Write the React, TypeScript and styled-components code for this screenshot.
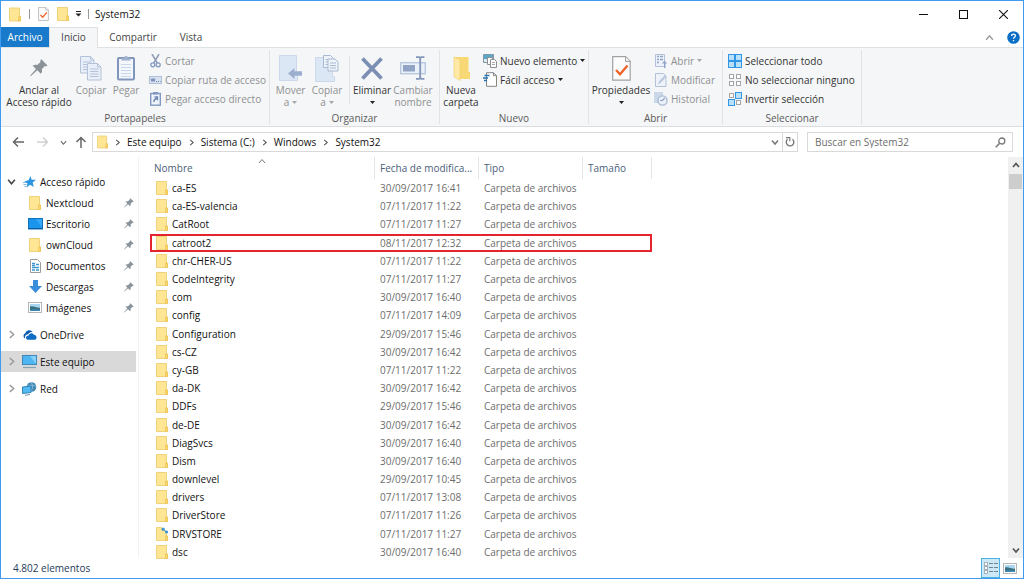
import React from "react";
import styled, { createGlobalStyle, css } from "styled-components";

const GlobalStyle = createGlobalStyle`
  *, *::before, *::after { box-sizing: border-box; }
  html, body, #root { height: 100%; margin: 0; }
  body, button, input, table {
    font-family: "Open Sans", "Noto Sans", sans-serif;
    font-size: 10px;
    line-height: 12px;
  }
  button { border: 0; padding: 0; background: none; color: inherit; }
  a { color: inherit; text-decoration: none; }
  svg { display: block; flex: none; }
`;

/* ---------- Window ---------- */

const Window = styled.div`
  display: flex;
  flex-direction: column;
  height: 100vh;
  min-height: 480px;
  border: 1px solid #3f9bf0;
  background: #fff;
  color: #111;
`;

const TitleBar = styled.header`
  display: flex;
  align-items: center;
  height: 26px;
  padding-left: 8px;
`;

const QuickAccess = styled.div<{ $gap: number }>`
  display: flex;
  align-items: center;
  gap: ${(p) => p.$gap}px;
  margin-right: 6px;
`;

const Bar = styled.span`
  width: 1px;
  height: 10px;
  background: #9a9a9a;
`;

const IconButton = styled.button`
  display: flex;
  align-items: center;
  justify-content: center;
`;

const WindowTitle = styled.h1`
  flex: 1;
  margin: 0;
  font-size: 10px;
  font-weight: 400;
`;

const WindowButton = styled(IconButton)`
  width: 40px;
  height: 26px;
`;

/* ---------- Ribbon ---------- */

const TabStrip = styled.nav`
  display: flex;
  height: 21px;
  padding-right: 3px;
  border-bottom: 1px solid #dfe1e3;
`;

const Tab = styled.button<{ $kind?: "file" | "active"; $width: number }>`
  width: ${(p) => p.$width}px;
  height: 20px;
  color: #444;
  ${(p) =>
    p.$kind === "file" &&
    css`
      background: #1979ca;
      color: #fff;
    `}
  ${(p) =>
    p.$kind === "active" &&
    css`
      height: 21px;
      padding-bottom: 2px;
      border: 1px solid #dfe1e3;
      border-bottom: 0;
      background: #f5f6f7;
    `}
`;

const TabTools = styled.div`
  display: flex;
  align-items: center;
  gap: 13px;
  margin-left: auto;
`;

const Ribbon = styled.section`
  display: flex;
  height: 79px;
  padding: 2px 0;
  background: #f5f6f7;
  border-bottom: 1px solid #dcdddf;
`;

const Group = styled.div<{ $width: number }>`
  display: flex;
  flex-direction: column;
  flex: none;
  width: ${(p) => p.$width}px;
  border-right: 1px solid #e1e3e5;
`;

const GroupBody = styled.div`
  display: flex;
  flex: 1;
  padding-left: 2px;
`;

const GroupCaption = styled.div`
  height: 12px;
  color: #5a5a5a;
  text-align: center;
`;

const BigButton = styled.button<{ $width: number }>`
  display: flex;
  flex-direction: column;
  align-items: center;
  flex: none;
  width: ${(p) => p.$width}px;
  padding-top: 4px;
  color: #333;
  white-space: nowrap;
  &:disabled { color: #8e9092; }
`;

const BigIcon = styled.span`
  display: flex;
  align-items: center;
  justify-content: center;
  height: 28px;
  margin-bottom: 2px;
`;

const SecondLine = styled.span`
  display: flex;
  align-items: center;
  justify-content: center;
  gap: 3px;
  height: 12px;
`;

const SmallColumn = styled.div`
  display: flex;
  flex-direction: column;
  padding: 1px 0 0 3px;
`;

const SmallButton = styled.button`
  display: flex;
  align-items: center;
  gap: 3px;
  height: 19px;
  color: #333;
  white-space: nowrap;
  &:disabled { color: #8e9092; }
`;

const SmallIcon = styled.span`
  display: flex;
  align-items: center;
  justify-content: center;
  width: 14px;
`;

const Divider = styled.span`
  width: 1px;
  height: 48px;
  margin: 6px 2px 0 4px;
  background: #dfe1e3;
`;

/* ---------- Address bar ---------- */

const AddressRow = styled.div`
  display: flex;
  align-items: center;
  height: 30px;
  padding: 0 10px 0 5px;
`;

const NavButton = styled(IconButton)<{ $width: number }>`
  flex: none;
  width: ${(p) => p.$width}px;
  height: 20px;
`;

const AddressBox = styled.div`
  display: flex;
  align-items: center;
  flex: 1;
  height: 20px;
  padding-left: 4px;
  border: 1px solid #d9d9d9;
`;

const Crumbs = styled.nav`
  display: flex;
  align-items: center;
  flex: 1;
  padding-left: 6px;
`;

const Crumb = styled.a`
  display: flex;
  align-items: center;
  gap: 6px;
  margin-right: 6px;
`;

const RefreshButton = styled(NavButton)`
  height: 18px;
  border-left: 1px solid #d9d9d9;
`;

const SearchBox = styled.label`
  display: flex;
  align-items: center;
  width: 206px;
  height: 20px;
  margin-left: 9px;
  padding: 0 6px 0 7px;
  border: 1px solid #d9d9d9;
`;

const SearchInput = styled.input`
  flex: 1;
  min-width: 0;
  padding: 0;
  border: 0;
  outline: 0;
  background: none;
  &::placeholder { color: #6d6d6d; opacity: 1; }
`;

/* ---------- Body ---------- */

const Body = styled.div`
  display: flex;
  flex: 1;
  min-height: 0;
`;

const Sidebar = styled.nav`
  flex: none;
  width: 138px;
  padding: 14px 2px 0 0;
  border-right: 1px solid #f3f3f3;
`;

const TreeSection = styled.ul`
  margin: 0 0 6px;
  padding: 0;
  list-style: none;
`;

const TreeItem = styled.a<{ $nested?: boolean; $selected?: boolean }>`
  display: flex;
  align-items: center;
  height: 21px;
  padding: 0 2px 0 ${(p) => (p.$nested ? 26 : 5)}px;
  background: ${(p) => (p.$selected ? "#d9d9d9" : "transparent")};
`;

const TreeIcon = styled.span`
  display: flex;
  align-items: center;
  justify-content: center;
  width: 16px;
  margin-right: 3px;
`;

const Twisty = styled.span`
  display: flex;
  justify-content: center;
  width: 10px;
  margin-right: 5px;
`;

const TreeLabel = styled.span`
  flex: 1;
`;

const ListPane = styled.main`
  flex: 1;
  min-width: 0;
  padding-left: 11px;
`;

/* The last row reaches a little way into the empty top of the status bar. */
const FileTable = styled.table`
  width: 502px;
  height: calc(100% + 3px);
  table-layout: fixed;
  border-collapse: separate;
  border-spacing: 0;
`;

const HeadCell = styled.th`
  position: relative;
  height: 22px;
  padding: 0 5px;
  border-right: 1px solid #e5e5e5;
  color: #4c607a;
  font-weight: 400;
  text-align: left;
  white-space: nowrap;
  &:first-child { padding-left: 4px; }
`;

const SortMark = styled.span`
  position: absolute;
  top: 0;
  left: calc(50% - 4px);
`;

const FileRow = styled.tr<{ $marked?: boolean }>`
  ${(p) =>
    p.$marked &&
    css`
      outline: 2px solid #e3242e;
      outline-offset: -2px;
    `}
`;

const Cell = styled.td`
  padding: 0 5px;
  color: #6d6d6d;
  white-space: nowrap;
`;

const NameCell = styled(Cell)`
  padding-left: 6px;
  color: #111;
`;

const FileName = styled.a`
  display: flex;
  align-items: center;
  gap: 4px;
  height: 15px;
`;

const ScrollTrack = styled.div`
  display: flex;
  flex-direction: column;
  align-items: center;
  width: 15px;
  background: #f0f0f0;
`;

const ScrollButton = styled(IconButton)`
  width: 15px;
  height: 16px;
`;

const ScrollThumb = styled.div`
  width: 13px;
  height: 15px;
  margin: 1px 0 auto;
  background: #cdcdcd;
`;

const StatusBar = styled.footer`
  display: flex;
  align-items: center;
  height: 20px;
  padding: 0 4px 0 12px;
  color: #1e395b;
`;

const StatusText = styled.span`
  flex: 1;
`;

const ViewButton = styled(IconButton)<{ $on?: boolean }>`
  width: 19px;
  height: 20px;
  border: 1px solid ${(p) => (p.$on ? "#4ab2e2" : "transparent")};
  background: ${(p) => (p.$on ? "#cce8f6" : "transparent")};
`;

/* ---------- Icons ---------- */

const Folder = ({ w = 12, h = 14, linked = false }: { w?: number; h?: number; linked?: boolean }) => (
  <svg width={w} height={h} viewBox="0 0 12 14" aria-hidden="true">
    <path d={linked ? "M.5 .5h5l5 5v3.500h1v4.500H.5z" : "M.5 .5h10v8.500h1v4.500H.5z"} fill="#ffe694" stroke="#f0d27a" />
    <path d="M9.500 9h2v4.500h-2z" fill="#fbd96b" stroke="#e9c256" strokeWidth=".7" />
    {linked && <path d="M6 1.200h2.200v2H6zM8 3l2 1.500M9.500 4h2v2h-2z" fill="#3f93cf" stroke="#3f93cf" strokeWidth=".8" />}
  </svg>
);

const Chevron = ({ dir, size = 8, color = "#555", weight = 1.2 }: { dir: "up" | "down" | "right"; size?: number; color?: string; weight?: number }) => {
  const d = { up: "M1 6l3-3.500L7 6", down: "M1 2.500L4 6l3-3.500", right: "M2.500 1L6 4 2.500 7" }[dir];
  return (
    <svg width={size} height={size} viewBox="0 0 8 8" aria-hidden="true">
      <path d={d} fill="none" stroke={color} strokeWidth={weight} />
    </svg>
  );
};

const Caret = ({ color = "#222" }: { color?: string }) => (
  <svg width="5" height="3" viewBox="0 0 5 3" aria-hidden="true">
    <path d="M0 0h5L2.500 3z" fill={color} />
  </svg>
);

const CheckedPage = ({ w, h }: { w: number; h: number }) => (
  <svg width={w} height={h} viewBox="0 0 19 25" aria-hidden="true">
    <path d="M.7.700h13l4.500 4.500v19H.7z" fill="#fcfcfc" stroke="#a2a2a2" strokeWidth="1.200" />
    <path d="M13.500.700v4.800h4.700" fill="#eee" stroke="#a2a2a2" />
    <path d="M4 14l4 4.300 7.500-8.800" fill="none" stroke="#f0642a" strokeWidth="2.400" />
  </svg>
);

const QuickMenu = () => (
  <svg width="7" height="6" viewBox="0 0 7 6" aria-hidden="true">
    <path d="M1 .5h5" stroke="#222" />
    <path d="M.5 2.500h6L3.500 5.500z" fill="#222" />
  </svg>
);

const Pin = ({ size, color }: { size: number; color: string }) => (
  <svg width={size} height={size} viewBox="0 0 18 18" aria-hidden="true">
    <path d="M11.300.300l6.200 6.200-1.700.9-1-.3-3 3.100c.6 2 .2 3.400-1 4.500l-3.500-3.400L.6 17.300 0 16.800l6-6.700-3.300-3.400c1.200-1 2.700-1.300 4.500-.8l3.300-3-.2-1.300z" fill={color} />
  </svg>
);

const CopyPages = () => (
  <svg width="22" height="25" viewBox="0 0 22 25" aria-hidden="true">
    {[[0.5, 0.5], [7.5, 7.500]].map(([x, y]) => (
      <g key={x} transform={`translate(${x} ${y})`}>
        <path d="M0 0h10l3.500 3.500v13H0z" fill="#e8eff8" stroke="#b3c2d9" />
        <path d="M10 0v3.500h3.500M2.500 5.500h8.500M2.500 8h8.500M2.500 10.500h8.500M2.500 13h8.500" fill="none" stroke="#b3c2d9" />
      </g>
    ))}
  </svg>
);

const Clipboard = () => (
  <svg width="18" height="26" viewBox="0 0 18 26" aria-hidden="true">
    <rect x="1" y="3" width="16" height="21.500" rx="1" fill="#f3f7fc" stroke="#8095bb" strokeWidth="2" />
    <path d="M4.500 5.500V3H7a2 2 0 0 1 4 0h2.500v2.500z" fill="#9fb0cc" />
    <path d="M4 9.500h10M4 12.500h10M4 15.500h10M4 18.500h10M4 21.500h10" stroke="#cbd8ea" />
  </svg>
);

const Scissors = () => (
  <svg width="11" height="14" viewBox="0 0 11 14" aria-hidden="true">
    <path d="M2 0l5.200 9M9 0L3.800 9" stroke="#8f9db8" strokeWidth="1.500" />
    <circle cx="2.800" cy="10.800" r="2" fill="none" stroke="#8398c0" strokeWidth="1.300" />
    <circle cx="8.200" cy="10.800" r="2" fill="none" stroke="#8398c0" strokeWidth="1.300" />
  </svg>
);

const PathTag = () => (
  <svg width="13" height="8" viewBox="0 0 13 8" aria-hidden="true">
    <rect x=".5" y=".5" width="12" height="7" fill="#d7e1f0" stroke="#b2c1da" />
    <path d="M2 2.500l1 3 1-3 1 3 1-3M7 5.500h1M9 5.500h1M11 5.500h.7" fill="none" stroke="#7389b3" />
  </svg>
);

const PasteLink = () => (
  <svg width="11" height="14" viewBox="0 0 11 14" aria-hidden="true">
    <rect x=".7" y="1.500" width="9.600" height="11.700" fill="#eef3fa" stroke="#8398c0" strokeWidth="1.400" />
    <path d="M3 0h5v2.500H3z" fill="#8398c0" />
    <path d="M3.800 10c0-2 .8-3 3-3.500M4.500 5h3v3.200" fill="none" stroke="#6d84b2" strokeWidth="1.300" />
  </svg>
);

const MoveTo = () => (
  <svg width="24" height="26" viewBox="0 0 24 26" aria-hidden="true">
    <path d="M.5.500h17v20h1v5H.5z" fill="#dce7f5" stroke="#cdd9ea" />
    <path d="M9 18.500l6.500-5.500v3.200H23v4.600h-7.500V24z" fill="#9dafcf" />
  </svg>
);

const CopyTo = () => (
  <svg width="24" height="27" viewBox="0 0 24 27" aria-hidden="true">
    <path d="M.5 2.500h17v19h2v5H.5z" fill="#dce7f5" stroke="#cdd9ea" />
    {[[8.500, 0.5], [13, 4]].map(([x, y]) => (
      <g key={x} transform={`translate(${x} ${y})`}>
        <path d="M0 0h7l3 3v9H0z" fill="#eef3fa" stroke="#a9b9d3" />
        <path d="M2 4h6M2 6.500h6M2 9h6" stroke="#a9b9d3" />
      </g>
    ))}
  </svg>
);

const DeleteCross = () => (
  <svg width="22" height="23" viewBox="0 0 22 23" aria-hidden="true">
    <path d="M1.500 1.500l19 20M20.500 1.500l-19 20" stroke="#7b8eb3" strokeWidth="3.800" />
  </svg>
);

const Rename = () => (
  <svg width="26" height="24" viewBox="0 0 26 24" aria-hidden="true">
    <rect x=".7" y="6.700" width="24.600" height="11" fill="#eaf1f9" stroke="#b8c8df" strokeWidth="1.400" />
    <rect x="3" y="9" width="12" height="6.500" fill="#91a4c6" />
    <path d="M16 1.200h3.200l1 1 1-1h3.200M20.200 2v20M16 22.800h3.200l1-1 1 1h3.200" fill="none" stroke="#8396ba" strokeWidth="1.800" />
  </svg>
);

const NewFolder = () => (
  <svg width="17" height="25" viewBox="0 0 17 25" aria-hidden="true">
    <path d="M1 1h14.500v15H17v7H4z" fill="#f8d775" />
    <path d="M1 1l6 3v20.500L1 21z" fill="#ffe9a4" stroke="#f2cf6a" strokeWidth=".6" />
  </svg>
);

const NewItem = () => (
  <svg width="14" height="14" viewBox="0 0 14 14" aria-hidden="true">
    <path d="M.5.500h10v8h-10z" fill="#dcecf5" stroke="#7f97a7" />
    <path d="M1 1h9v4H1z" fill="#59a7c9" />
    <path d="M4.500 3.500h5v7h-5z" fill="#fff" stroke="#8f8f8f" />
    <path d="M7.500 5.500h4l2 2v6h-6z" fill="#fff" stroke="#8f8f8f" />
    <path d="M9 8.500h3M9 10.500h3" stroke="#aaa" />
  </svg>
);

const EasyAccess = () => (
  <svg width="14" height="15" viewBox="0 0 14 15" aria-hidden="true">
    <path d="M3.500.700h7l3 3v10.600h-10z" fill="#fff" stroke="#858585" />
    <path d="M10.500.700v3h3" fill="none" stroke="#858585" />
    <path d="M1.500 3.500h5M0 6h5M1 8.500h3" stroke="#2574b5" strokeWidth="1.500" />
  </svg>
);

const OpenItem = () => (
  <svg width="12" height="14" viewBox="0 0 12 14" aria-hidden="true">
    <path d="M.5.500h9v12h-9z" fill="#edf2fa" stroke="#b3c2d9" />
    <path d="M2 2.500h2M2 5.500h2M2 8.500h2M5 2.500h3M5 5.500h3" stroke="#8fa3c8" strokeWidth="1.500" />
    <path d="M9 14V9.500H7L9.500 6.500 12 9.500h-1.500V14z" fill="#91a4c9" />
  </svg>
);

const EditItem = () => (
  <svg width="12" height="14" viewBox="0 0 12 14" aria-hidden="true">
    <path d="M.5.500h8l2.500 2.500v10.500H.5z" fill="#eef3fa" stroke="#b3c2d9" />
    <path d="M3 11.500L4 8.500l6-6.500 1.500 1.500-6 6.500z" fill="#b8c7de" />
  </svg>
);

const History = () => (
  <svg width="14" height="14" viewBox="0 0 14 14" aria-hidden="true">
    <path d="M0 0h9v11H0z" fill="#cbd8ea" />
    <circle cx="8.500" cy="8.500" r="4.600" fill="#eaf0f8" stroke="#a9b9d3" strokeWidth="1.400" />
    <path d="M6 8.500h2.500l2.300-2.500" fill="none" stroke="#8fa3c8" strokeWidth="1.200" />
  </svg>
);

const Squares = ({ on }: { on: boolean[] }) => (
  <svg width="14" height="14" viewBox="0 0 14 14" aria-hidden="true">
    {on.map((lit, i) => {
      const size = lit ? 6 : 4;
      const x = (i % 2) * 7 + (lit ? 0.5 : 1.5);
      const y = Math.floor(i / 2) * 7 + (lit ? 0.5 : 1.5);
      return <rect key={i} x={x} y={y} width={size} height={size} fill={lit ? "#b9e0fa" : "#fff"} stroke={lit ? "#2f97e6" : "#a5a5a5"} />;
    })}
  </svg>
);

const Arrow = ({ dir, color }: { dir: "left" | "right" | "up"; color: string }) => {
  const d = { left: "M12 6H1.500M6 1.500L1.500 6 6 10.500", right: "M0 6h10.500M6 1.500l4.500 4.500L6 10.500", up: "M6 12V1.500M1.500 6L6 1.500 10.500 6" }[dir];
  return (
    <svg width="12" height="12" viewBox="0 0 12 12" aria-hidden="true">
      <path d={d} fill="none" stroke={color} strokeWidth="1.500" />
    </svg>
  );
};

const Refresh = () => (
  <svg width="10" height="10" viewBox="0 0 10 10" aria-hidden="true">
    <path d="M7.500 2.200A3.800 3.800 0 1 1 2.500 2.300" fill="none" stroke="#777" strokeWidth="1.400" />
    <path d="M1 .7h3.800v3.600" fill="none" stroke="#777" strokeWidth="1.200" />
  </svg>
);

const Magnifier = () => (
  <svg width="11" height="11" viewBox="0 0 11 11" aria-hidden="true">
    <circle cx="6.800" cy="4" r="3" fill="none" stroke="#777" strokeWidth="1.300" />
    <path d="M4.700 6.200L.7 10.200" stroke="#777" strokeWidth="1.600" />
  </svg>
);

const Help = () => (
  <svg width="13" height="13" viewBox="0 0 13 13" aria-hidden="true">
    <circle cx="6.500" cy="6.500" r="6.300" fill="#0b6fc7" />
    <path d="M4.600 5c0-2.600 3.800-2.400 3.800-.2 0 1.400-1.900 1.400-1.900 3M6.500 9v1.300" fill="none" stroke="#fff" strokeWidth="1.300" />
  </svg>
);

const QuickStar = () => (
  <svg width="13" height="12" viewBox="0 0 13 12" aria-hidden="true">
    <path d="M7.500 0l1.200 3.700 4.300.1-3.300 2.600 1 4.600-3.600-2.300L3.500 11.500l1-4L1.500 5.500 5.700 4z" fill="#2b95e0" />
    <path d="M0 6.500h3M.5 8.500h3M1.500 10.500h2" stroke="#7dbdea" />
  </svg>
);

const Desktop = () => (
  <svg width="15" height="12" viewBox="0 0 15 12" aria-hidden="true">
    <rect x=".5" y=".5" width="14" height="10.500" fill="#1a95ee" stroke="#1270b8" />
    <path d="M8 1h6v9z" fill="#36a9f8" />
    <path d="M1 10.500h13" stroke="#0e5f9f" />
  </svg>
);

const DocumentIcon = () => (
  <svg width="11" height="14" viewBox="0 0 11 14" aria-hidden="true">
    <path d="M.5.500h7l3 3v10H.5z" fill="#fff" stroke="#9b9b9b" />
    <path d="M2 4.500h3M6 5.500h3M2 6.500h3M2 8.500h7M2 11h3M6 11h3" stroke="#3b97cf" strokeWidth="1.300" />
  </svg>
);

const DownloadArrow = () => (
  <svg width="13" height="13" viewBox="0 0 13 13" aria-hidden="true">
    <path d="M4 0h5v6h4l-6.500 7L0 6h4z" fill="#3a8fdd" />
  </svg>
);

const Picture = () => (
  <svg width="14" height="11" viewBox="0 0 14 11" aria-hidden="true">
    <rect x=".5" y=".5" width="13" height="10" fill="#fff" stroke="#b5b5b5" />
    <rect x="2" y="2" width="10" height="3" fill="#a8d5f2" />
    <path d="M2 4.500c4-1 6 1.500 10 1V9H2z" fill="#3a7180" />
    <path d="M2 7.500h10V9H2z" fill="#3b88b8" />
  </svg>
);

const OneDrive = () => (
  <svg width="15" height="10" viewBox="0 0 15 10" aria-hidden="true">
    <path d="M3 8.500a3 3 0 0 1 .2-5.300A4.300 4.300 0 0 1 10.700 2C8 1.500 6.700 3 6.300 4.300 3.500 4.300 2.800 6.500 3 8.500z" fill="#0b5cad" />
    <path d="M5.800 9.700c-2.700-.5-2.300-4.400.9-4.300C7.500 2.500 11 2.500 11.800 4.800c3.500.2 3.500 4.500 1 4.900z" fill="#0f6cc4" />
  </svg>
);

const Computer = () => (
  <svg width="15" height="14" viewBox="0 0 15 14" aria-hidden="true">
    <rect x=".5" y=".5" width="14" height="9" fill="#4db5f2" stroke="#3d88b8" />
    <path d="M8 1h6v8z" fill="#84d0fa" />
    <path d="M1 12.500h13" stroke="#86a2b5" strokeWidth="1.200" />
  </svg>
);

const Network = () => (
  <svg width="15" height="14" viewBox="0 0 15 14" aria-hidden="true">
    <circle cx="9.500" cy="5" r="4.800" fill="#4388b4" />
    <path d="M6 3c2 1.500 5-1 8 1.500M9 0c2 3 2 6 0 9" fill="none" stroke="#8fc0db" />
    <path d="M.5 5l8.500-1v6.500l-8.500 1z" fill="#52b9f2" stroke="#3584b4" />
    <path d="M3 13.300l5-.8" stroke="#7694a8" />
  </svg>
);

const DetailsView = () => (
  <svg width="14" height="12" viewBox="0 0 14 12" aria-hidden="true">
    {[0, 4, 8].map((y) => (
      <g key={y}>
        <rect x=".5" y={y + 0.5} width="3" height="3" fill="#fff" stroke="#a3b1bb" />
        <path d={`M5 ${y + 1.500}h4M10 ${y + 1.500}h4`} stroke="#71838f" />
      </g>
    ))}
  </svg>
);

const MinimizeIcon = () => (
  <svg width="9" height="9" viewBox="0 0 9 9" aria-hidden="true"><path d="M0 4.500h9" stroke="#111" /></svg>
);
const MaximizeIcon = () => (
  <svg width="9" height="9" viewBox="0 0 9 9" aria-hidden="true"><rect x=".5" y=".5" width="8" height="8" fill="none" stroke="#111" /></svg>
);
const CloseIcon = () => (
  <svg width="9" height="9" viewBox="0 0 9 9" aria-hidden="true"><path d="M0 0l9 9M9 0L0 9" stroke="#111" strokeWidth="1.100" /></svg>
);

/* ---------- Data ---------- */

const files: [string, string][] = [
  ["ca-ES", "30/09/2017 16:41"],
  ["ca-ES-valencia", "07/11/2017 11:22"],
  ["CatRoot", "07/11/2017 11:27"],
  ["catroot2", "08/11/2017 12:32"],
  ["chr-CHER-US", "07/11/2017 11:22"],
  ["CodeIntegrity", "07/11/2017 11:27"],
  ["com", "30/09/2017 16:40"],
  ["config", "07/11/2017 14:09"],
  ["Configuration", "29/09/2017 15:46"],
  ["cs-CZ", "30/09/2017 16:42"],
  ["cy-GB", "07/11/2017 11:22"],
  ["da-DK", "30/09/2017 16:42"],
  ["DDFs", "29/09/2017 15:46"],
  ["de-DE", "30/09/2017 16:42"],
  ["DiagSvcs", "30/09/2017 16:40"],
  ["Dism", "30/09/2017 16:40"],
  ["downlevel", "29/09/2017 10:45"],
  ["drivers", "07/11/2017 13:08"],
  ["DriverStore", "07/11/2017 11:26"],
  ["DRVSTORE", "07/11/2017 11:27"],
  ["dsc", "30/09/2017 16:40"],
];

const pinned: [string, React.ReactNode][] = [
  ["Nextcloud", <Folder key="i" />],
  ["Escritorio", <Desktop key="i" />],
  ["ownCloud", <Folder key="i" />],
  ["Documentos", <DocumentIcon key="i" />],
  ["Descargas", <DownloadArrow key="i" />],
  ["Imágenes", <Picture key="i" />],
];

const places: [string, React.ReactNode, boolean][] = [
  ["OneDrive", <OneDrive key="i" />, false],
  ["Este equipo", <Computer key="i" />, true],
  ["Red", <Network key="i" />, false],
];

/* ---------- Composed parts ---------- */

type BigProps = { icon: React.ReactNode; label: string; second?: string; width: number; disabled?: boolean; menu?: boolean };

const Big = ({ icon, label, second, width, disabled, menu }: BigProps) => (
  <BigButton $width={width} disabled={disabled}>
    <BigIcon>{icon}</BigIcon>
    <span>{label}</span>
    <SecondLine>
      {second}
      {menu && <Caret color={disabled ? "#a5a7a9" : "#222"} />}
    </SecondLine>
  </BigButton>
);

const Small = ({ icon, label, disabled, menu }: { icon: React.ReactNode; label: string; disabled?: boolean; menu?: boolean }) => (
  <SmallButton disabled={disabled}>
    <SmallIcon>{icon}</SmallIcon>
    <span>{label}</span>
    {menu && <Caret color={disabled ? "#a5a7a9" : "#222"} />}
  </SmallButton>
);

export default function App() {
  return (
    <>
      <GlobalStyle />
      <Window>
        <TitleBar>
          <QuickAccess $gap={8}>
            <Folder h={15} />
            <Bar />
            <IconButton aria-label="Propiedades"><CheckedPage w={11} h={14} /></IconButton>
            <IconButton aria-label="Nueva carpeta"><Folder /></IconButton>
          </QuickAccess>
          <QuickAccess $gap={6}>
            <IconButton aria-label="Personalizar barra"><QuickMenu /></IconButton>
            <Bar />
          </QuickAccess>
          <WindowTitle>System32</WindowTitle>
          <WindowButton aria-label="Minimizar"><MinimizeIcon /></WindowButton>
          <WindowButton aria-label="Maximizar"><MaximizeIcon /></WindowButton>
          <WindowButton aria-label="Cerrar"><CloseIcon /></WindowButton>
        </TitleBar>

        <TabStrip>
          <Tab $kind="file" $width={48}>Archivo</Tab>
          <Tab $kind="active" $width={49}>Inicio</Tab>
          <Tab $width={70}>Compartir</Tab>
          <Tab $width={46}>Vista</Tab>
          <TabTools>
            <IconButton aria-label="Contraer la cinta"><Chevron dir="up" color="#999" size={9} /></IconButton>
            <IconButton aria-label="Ayuda"><Help /></IconButton>
          </TabTools>
        </TabStrip>

        <Ribbon>
          <Group $width={269}>
            <GroupBody>
              <Big width={72} icon={<Pin size={18} color="#8b9298" />} label="Anclar al" second="Acceso rápido" />
              <Big width={32} icon={<CopyPages />} label="Copiar" disabled />
              <Big width={38} icon={<Clipboard />} label="Pegar" disabled />
              <SmallColumn>
                <Small icon={<Scissors />} label="Cortar" disabled />
                <Small icon={<PathTag />} label="Copiar ruta de acceso" disabled />
                <Small icon={<PasteLink />} label="Pegar acceso directo" disabled />
              </SmallColumn>
            </GroupBody>
            <GroupCaption>Portapapeles</GroupCaption>
          </Group>
          <Group $width={170}>
            <GroupBody>
              <Big width={37} icon={<MoveTo />} label="Mover" second="a" menu disabled />
              <Big width={36} icon={<CopyTo />} label="Copiar" second="a" menu disabled />
              <Divider />
              <Big width={40} icon={<DeleteCross />} label="Eliminar" menu />
              <Big width={42} icon={<Rename />} label="Cambiar" second="nombre" disabled />
            </GroupBody>
            <GroupCaption>Organizar</GroupCaption>
          </Group>
          <Group $width={149}>
            <GroupBody>
              <Big width={38} icon={<NewFolder />} label="Nueva" second="carpeta" />
              <SmallColumn>
                <Small icon={<NewItem />} label="Nuevo elemento" menu />
                <Small icon={<EasyAccess />} label="Fácil acceso" menu />
              </SmallColumn>
            </GroupBody>
            <GroupCaption>Nuevo</GroupCaption>
          </Group>
          <Group $width={134}>
            <GroupBody>
              <Big width={60} icon={<CheckedPage w={19} h={25} />} label="Propiedades" menu />
              <SmallColumn>
                <Small icon={<OpenItem />} label="Abrir" menu disabled />
                <Small icon={<EditItem />} label="Modificar" disabled />
                <Small icon={<History />} label="Historial" disabled />
              </SmallColumn>
            </GroupBody>
            <GroupCaption>Abrir</GroupCaption>
          </Group>
          <Group $width={139}>
            <GroupBody>
              <SmallColumn>
                <Small icon={<Squares on={[true, true, true, true]} />} label="Seleccionar todo" />
                <Small icon={<Squares on={[false, false, false, false]} />} label="No seleccionar ninguno" />
                <Small icon={<Squares on={[false, true, true, false]} />} label="Invertir selección" />
              </SmallColumn>
            </GroupBody>
            <GroupCaption>Seleccionar</GroupCaption>
          </Group>
        </Ribbon>

        <AddressRow>
          <NavButton $width={24} aria-label="Atrás"><Arrow dir="left" color="#666" /></NavButton>
          <NavButton $width={26} aria-label="Adelante"><Arrow dir="right" color="#d0d0d0" /></NavButton>
          <NavButton $width={14} aria-label="Recientes"><Chevron dir="down" size={7} color="#666" /></NavButton>
          <NavButton $width={22} aria-label="Subir"><Arrow dir="up" color="#666" /></NavButton>
          <AddressBox>
            <Folder w={11} h={14} />
            <Crumbs aria-label="Ruta">
              {["Este equipo", "Sistema (C:)", "Windows", "System32"].map((c) => (
                <Crumb key={c} href="#"><Chevron dir="right" size={7} />{c}</Crumb>
              ))}
            </Crumbs>
            <NavButton $width={14} aria-label="Ubicaciones anteriores"><Chevron dir="down" weight={1.5} color="#777" /></NavButton>
            <RefreshButton $width={15} aria-label="Actualizar"><Refresh /></RefreshButton>
          </AddressBox>
          <SearchBox>
            <SearchInput type="text" placeholder="Buscar en System32" aria-label="Buscar en System32" />
            <Magnifier />
          </SearchBox>
        </AddressRow>

        <Body>
          <Sidebar>
            <TreeSection>
              <li>
                <TreeItem href="#">
                  <Twisty><Chevron dir="down" size={9} color="#444" weight={1.4} /></Twisty>
                  <TreeIcon><QuickStar /></TreeIcon>
                  <TreeLabel>Acceso rápido</TreeLabel>
                </TreeItem>
              </li>
              {pinned.map(([name, icon]) => (
                <li key={name}>
                  <TreeItem href="#" $nested>
                    <TreeIcon>{icon}</TreeIcon>
                    <TreeLabel>{name}</TreeLabel>
                    <Pin size={10} color="#88939b" />
                  </TreeItem>
                </li>
              ))}
            </TreeSection>
            {places.map(([name, icon, selected]) => (
              <TreeSection key={name}>
                <li>
                  <TreeItem href="#" $selected={selected}>
                    <Twisty><Chevron dir="right" size={9} color="#999" /></Twisty>
                    <TreeIcon>{icon}</TreeIcon>
                    <TreeLabel>{name}</TreeLabel>
                  </TreeItem>
                </li>
              </TreeSection>
            ))}
          </Sidebar>

          <ListPane>
            <FileTable>
              <colgroup>
                <col width="225" />
                <col width="104" />
                <col width="104" />
                <col width="69" />
              </colgroup>
              <thead>
                <tr>
                  <HeadCell>Nombre<SortMark><Chevron dir="up" color="#777" weight={1} /></SortMark></HeadCell>
                  <HeadCell>Fecha de modifica...</HeadCell>
                  <HeadCell>Tipo</HeadCell>
                  <HeadCell>Tamaño</HeadCell>
                </tr>
              </thead>
              <tbody>
                {files.map(([name, date]) => (
                  <FileRow key={name} $marked={name === "catroot2"}>
                    <NameCell>
                      <FileName href="#"><Folder linked={name === "DRVSTORE"} />{name}</FileName>
                    </NameCell>
                    <Cell>{date}</Cell>
                    <Cell>Carpeta de archivos</Cell>
                    <Cell />
                  </FileRow>
                ))}
              </tbody>
            </FileTable>
          </ListPane>

          <ScrollTrack>
            <ScrollButton aria-label="Desplazar arriba"><Chevron dir="up" weight={1.7} /></ScrollButton>
            <ScrollThumb />
            <ScrollButton aria-label="Desplazar abajo"><Chevron dir="down" weight={1.7} /></ScrollButton>
          </ScrollTrack>
        </Body>

        <StatusBar>
          <StatusText>4.802 elementos</StatusText>
          <ViewButton $on aria-label="Detalles"><DetailsView /></ViewButton>
          <ViewButton aria-label="Iconos grandes"><Picture /></ViewButton>
        </StatusBar>
      </Window>
    </>
  );
}
